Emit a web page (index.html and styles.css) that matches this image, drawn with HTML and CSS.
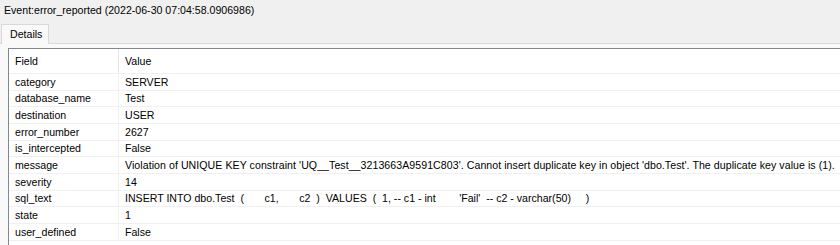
FILE: index.html
```html
<!DOCTYPE html>
<html>
<head>
<meta charset="utf-8">
<link rel="stylesheet" href="styles.css">
</head>
<body>
<div class="title">Event:error_reported (2022-06-30 07:04:58.0906986)</div>
<div class="tabstrip">
  <div class="tab">Details</div>
</div>
<div class="panel">
  <div class="grid">
    <div class="row head"><div class="c1">Field</div><div class="c2">Value</div></div>
    <div class="row"><div class="c1">category</div><div class="c2">SERVER</div></div>
    <div class="row"><div class="c1">database_name</div><div class="c2">Test</div></div>
    <div class="row"><div class="c1">destination</div><div class="c2">USER</div></div>
    <div class="row"><div class="c1">error_number</div><div class="c2">2627</div></div>
    <div class="row"><div class="c1">is_intercepted</div><div class="c2">False</div></div>
    <div class="row"><div class="c1">message</div><div class="c2 msg">Violation of UNIQUE KEY constraint 'UQ__Test__3213663A9591C803'. Cannot insert duplicate key in object 'dbo.Test'. The duplicate key value is (1).</div></div>
    <div class="row"><div class="c1">severity</div><div class="c2">14</div></div>
    <div class="row"><div class="c1">sql_text</div><div class="c2 pre">INSERT INTO dbo.Test  (       c1,       c2  )  VALUES  (  1, -- c1 - int        'Fail'  -- c2 - varchar(50)     )</div></div>
    <div class="row"><div class="c1">state</div><div class="c2">1</div></div>
    <div class="row"><div class="c1">user_defined</div><div class="c2">False</div></div>
  </div>
</div>
</body>
</html>
```
FILE: styles.css
```css
html, body {
  margin: 0;
  padding: 0;
}
body {
  background: #f0f0f0;
  font-family: "Liberation Sans", Arial, sans-serif;
  font-size: 10.6px;
  color: #000;
  width: 840px;
  height: 245px;
  overflow: hidden;
}
.title {
  height: 20px;
  line-height: 20px;
  padding-left: 4px;
  white-space: nowrap;
}
.tabstrip {
  height: 23px;
  display: flex;
  align-items: flex-end;
  padding-left: 1px;
}
.tab {
  height: 20px;
  line-height: 18px;
  padding-left: 8px;
  box-sizing: border-box;
  width: 48px;
  background: #f9f9f9;
  border: 1px solid #d9d9d9;
  border-bottom: none;
  position: relative;
  z-index: 1;
  margin-bottom: -1px;
}
.panel {
  background: #f9f9f9;
  border-top: 1px solid #dadada;
  padding: 4px 0 0 8px;
  height: 200px;
}
.grid {
  background: #fff;
  border-top: 1px solid #828790;
  border-left: 1px solid #828790;
  width: 831px;
  height: 200px;
  overflow: hidden;
}
.row {
  display: grid;
  grid-template-columns: 110px 1fr;
  height: 16.667px;
  box-sizing: border-box;
  border-bottom: 1px solid #f0f0f0;
  white-space: nowrap;
}
.row.head {
  height: 25px;
}
.c1 {
  padding-left: 6px;
  border-right: 1px solid #f0f0f0;
  display: flex;
  align-items: center;
}
.c2 {
  padding-left: 6px;
  display: flex;
  align-items: center;
  overflow: hidden;
}
.head .c1 {
  border-right-color: #e5e5e5;
}
.msg {
  letter-spacing: 0.055px;
}
.pre {
  white-space: pre;
}
```
